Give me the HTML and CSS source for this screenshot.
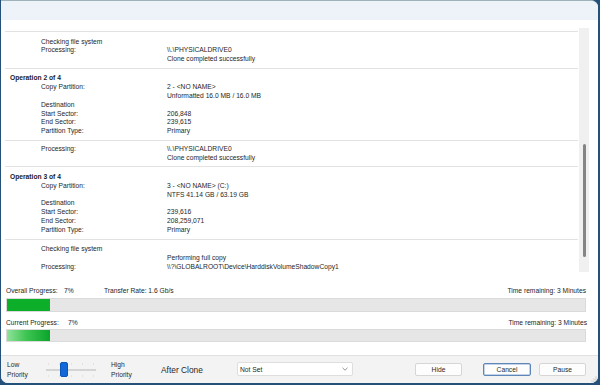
FILE: index.html
```html
<!DOCTYPE html>
<html>
<head>
<meta charset="utf-8">
<link rel="stylesheet" href="styles.css">
</head>
<body>
<div class="window">
  <div class="titlebar"></div>
  <div class="content">
    <div class="logpanel">
      <div class="log">
        <div class="group g0"></div>
        <div class="group">
          <div class="rows">
            <span>Checking file system</span><span></span>
            <span>Processing:</span><span>\\.\PHYSICALDRIVE0</span>
            <span></span><span>Clone completed successfully</span>
          </div>
        </div>
        <div class="group">
          <div class="optitle">Operation 2 of 4</div>
          <div class="rows">
            <span>Copy Partition:</span><span>2 - &lt;NO NAME&gt;</span>
            <span></span><span>Unformatted 16.0 MB / 16.0 MB</span>
            <span>Destination</span><span></span>
            <span>Start Sector:</span><span>206,848</span>
            <span>End Sector:</span><span>239,615</span>
            <span>Partition Type:</span><span>Primary</span>
          </div>
        </div>
        <div class="group g3">
          <div class="rows">
            <span>Processing:</span><span>\\.\PHYSICALDRIVE0</span>
            <span></span><span>Clone completed successfully</span>
          </div>
        </div>
        <div class="group g4">
          <div class="optitle">Operation 3 of 4</div>
          <div class="rows">
            <span>Copy Partition:</span><span>3 - &lt;NO NAME&gt; (C:)</span>
            <span></span><span>NTFS 41.14 GB / 63.19 GB</span>
            <span>Destination</span><span></span>
            <span>Start Sector:</span><span>239,616</span>
            <span>End Sector:</span><span>208,259,071</span>
            <span>Partition Type:</span><span>Primary</span>
          </div>
        </div>
        <div class="group">
          <div class="rows">
            <span>Checking file system</span><span></span>
            <span></span><span>Performing full copy</span>
            <span>Processing:</span><span>\\?\GLOBALROOT\Device\HarddiskVolumeShadowCopy1</span>
          </div>
        </div>
      </div>
      <div class="scrollbar"><div class="thumb"></div></div>
    </div>

    <div class="progress">
      <div class="prow">
        <span class="plabel">Overall Progress:</span><span class="pct">7%</span>
        <span class="rate">Transfer Rate: 1.6 Gb/s</span>
        <span class="remain">Time remaining: 3 Minutes</span>
      </div>
      <div class="bar"><div class="fill" style="width:7.5%"></div></div>
      <div class="prow">
        <span class="plabel">Current Progress:</span><span class="pct pct2">7%</span>
        <span class="remain">Time remaining: 3 Minutes</span>
      </div>
      <div class="bar bar2"><div class="fill fill2" style="width:7.5%"></div></div>
    </div>
  </div>

  <div class="footer">
    <div class="pri pri-low">Low<br>Priority</div>
    <div class="slider">
      <div class="ticks top"><i></i><i></i><i></i><i></i><i></i></div>
      <div class="track"></div>
      <div class="ticks bottom"><i></i><i></i><i></i><i></i><i></i></div>
      <div class="knob"></div>
    </div>
    <div class="pri pri-high">High<br>Priority</div>
    <div class="after">After Clone</div>
    <div class="select">
      <span>Not Set</span>
      <svg class="chev" width="6" height="4" viewBox="0 0 6 4"><path d="M0.5 0.8 L3 3.2 L5.5 0.8" fill="none" stroke="#777" stroke-width="0.8"/></svg>
    </div>
    <div class="spacer"></div>
    <div class="btn btn-hide">Hide</div>
    <div class="btn btn-cancel">Cancel</div>
    <div class="btn btn-pause">Pause</div>
    <svg class="grip" width="6" height="6" viewBox="0 0 6 6"><circle cx="5" cy="1" r="0.5" fill="#999"/><circle cx="3" cy="3" r="0.5" fill="#999"/><circle cx="5" cy="3" r="0.5" fill="#999"/><circle cx="1" cy="5" r="0.5" fill="#999"/><circle cx="3" cy="5" r="0.5" fill="#999"/><circle cx="5" cy="5" r="0.5" fill="#999"/></svg>
  </div>
</div>
</body>
</html>
```

FILE: styles.css
```css
* { box-sizing: border-box; }
html, body {
  margin: 0;
  padding: 0;
}
body {
  width: 600px;
  height: 385px;
  overflow: hidden;
  background: #24507a;
  font-family: "Liberation Sans", Arial, sans-serif;
  font-size: 6.7px;
  color: #262626;
}
.window {
  position: relative;
  margin: 0 2px 0 1px;
  width: 597px;
  height: 383px;
  background: #ffffff;
  border-radius: 0 7px 7px 7px;
  border-top: 1px solid #9fb3bd;
  overflow: hidden;
  display: flex;
  flex-direction: column;
}
.titlebar {
  height: 19px;
  background: #eef3f9;
  flex: none;
}
.content {
  flex: 1;
  display: flex;
  flex-direction: column;
  padding: 8px 9px 0 4px;
}
.logpanel {
  display: flex;
  height: 244px;
  flex: none;
}
.log {
  flex: 1;
  overflow: hidden;
  margin-right: 1px;
}
.group {
  border-top: 1px solid #e2e2e2;
  padding: 5.5px 0 4px 0;
}
.group.g0 {
  border-top: none;
  height: 3px;
  padding: 0;
}
.group.g3 { padding: 4px 0 3.5px 0; }
.group.g4 { padding: 6px 0 4px 0; }
.optitle {
  font-weight: bold;
  line-height: 8.8px;
  padding-left: 5px;
  color: #1a1a1a;
}
.rows {
  display: grid;
  grid-template-columns: 126px 1fr;
  line-height: 8.8px;
  padding-left: 36px;
  white-space: nowrap;
}
.scrollbar {
  width: 10px;
  background: #f0f0f0;
  position: relative;
  flex: none;
}
.thumb {
  position: absolute;
  left: 4px;
  top: 116px;
  width: 2.5px;
  height: 113px;
  background: #858585;
  border-radius: 2px;
}
.progress {
  padding: 13.5px 3px 0 1px;
}
.prow {
  display: flex;
  height: 9px;
  line-height: 9px;
  margin-bottom: 3.5px;
  white-space: nowrap;
}
.plabel { width: 58px; }
.pct { width: 40px; }
.pct2 { width: 40px; margin-left: 4px; }
.rate { }
.remain { margin-left: auto; }
.prow:nth-of-type(3) .remain { margin-right: -1px; }
.bar {
  height: 14px;
  background: #e6e6e6;
  border: 1px solid #dadada;
  margin-bottom: 5.5px;
}
.bar2 {
  margin-bottom: 0;
  height: 13.5px;
}
.prow + .bar2 { }
.bar2 { margin-top: -1.5px; }
.fill {
  height: 100%;
  background: #0cae2a;
}
.fill2 {
  background: linear-gradient(to right, #8fe39a 0%, #3ec452 45%, #0aa52a 100%);
}
.footer {
  height: 28px;
  flex: none;
  background: #f3f3f3;
  border-top: 1px solid #e0e0e0;
  display: flex;
  align-items: center;
  padding: 0 12px 0 6px;
  position: relative;
}
.pri {
  line-height: 9.5px;
  color: #2a2a2a;
}
.pri-low { width: 39px; }
.slider {
  position: relative;
  width: 50px;
  height: 16px;
  margin-right: 15px;
}
.track {
  position: absolute;
  left: 0;
  right: 0;
  top: 7.5px;
  height: 1.5px;
  background: #d4d4d4;
}
.ticks {
  position: absolute;
  left: 2px;
  right: 2px;
  display: flex;
  justify-content: space-between;
}
.ticks.top { top: 1px; }
.ticks.bottom { bottom: 1px; }
.ticks i {
  display: block;
  width: 1px;
  height: 2px;
  background: #e2e2e2;
}
.knob {
  position: absolute;
  left: 14px;
  top: 0.5px;
  width: 8px;
  height: 15px;
  background: #1268d8;
  border: 1px solid #0b56b8;
  border-radius: 2px;
}
.pri-high { width: 50px; }
.after {
  width: 76px;
  font-size: 8.4px;
  color: #2a2a2a;
}
.select {
  width: 116px;
  height: 14px;
  background: #ffffff;
  border: 1px solid #dedede;
  border-radius: 2px;
  display: flex;
  align-items: center;
  padding: 0 4px 0 2px;
  margin-top: -1px;
}
.select span { flex: 1; }
.chev { display: block; }
.spacer { flex: 1; }
.btn {
  height: 13.5px;
  background: #fdfdfd;
  border: 1px solid #d6d6d6;
  border-radius: 2px;
  display: flex;
  align-items: center;
  justify-content: center;
  color: #2a2a2a;
}
.btn-hide { width: 47px; margin-right: 21px; }
.btn-cancel { width: 48px; margin-right: 8px; border-color: #5e86b8; box-shadow: inset 0 0 0 0.5px #8aa8cf; }
.btn-pause { width: 47px; }
.grip {
  position: absolute;
  right: 1px;
  bottom: 1px;
}
```
